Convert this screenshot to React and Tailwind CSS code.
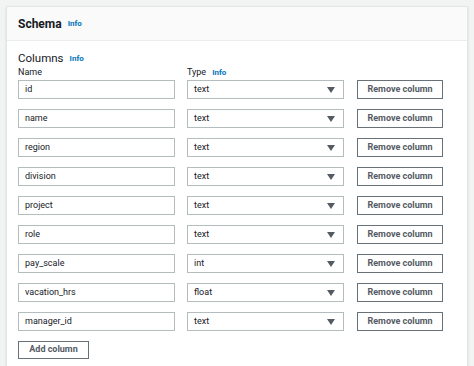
const rows = [
  ["id", "text"],
  ["name", "text"],
  ["region", "text"],
  ["division", "text"],
  ["project", "text"],
  ["role", "text"],
  ["pay_scale", "int"],
  ["vacation_hrs", "float"],
  ["manager_id", "text"],
];

const Info = () => (
  <span className="ml-[6px] text-[8px] font-bold text-[#0073bb]">Info</span>
);

export default function App() {
  return (
    <div
      className="min-h-screen bg-[#f2f3f3] pl-[6px] pt-[6px] pr-[6px] text-[#16191f]"
      style={{ fontFamily: 'Roboto, "Open Sans", sans-serif' }}
    >
      <div className="w-[462px] border border-[#e4e6e6] bg-white shadow-[0_1px_2px_rgba(0,0,0,0.12)]">
        {/* header */}
        <div className="flex h-[34px] items-center border-b border-[#eaeded] bg-[#fafafa] px-[11px]">
          <span className="text-[12px] font-bold">Schema</span>
          <Info />
        </div>

        <div className="px-[11px] pt-[10px] pb-[10px]">
          <div className="flex items-center leading-[15px]">
            <span className="text-[11.5px]">Columns</span>
            <Info />
          </div>

          <div className="flex text-[9px] leading-[13px]">
            <div className="w-[169px]">Name</div>
            <div className="flex items-center">
              Type
              <Info />
            </div>
          </div>

          <div className="mt-[1px] flex flex-col gap-[10px]">
            {rows.map(([name, type]) => (
              <div key={name} className="flex items-center">
                <div className="flex h-[19px] w-[157px] items-center border border-[#b4bdbe] px-[6px] text-[9px]">
                  {name}
                </div>
                <div className="ml-[12px] flex h-[19px] w-[157px] items-center justify-between border border-[#b4bdbe] pl-[6px] pr-[8px] text-[9px]">
                  <span>{type}</span>
                  <svg width="8" height="6" viewBox="0 0 8 6">
                    <path d="M0 0h8L4 6z" fill="#545b64" />
                  </svg>
                </div>
                <button className="ml-[13px] flex h-[19px] w-[86px] items-center justify-center border border-[#687078] bg-white text-[9px] font-bold text-[#545b64]">
                  Remove column
                </button>
              </div>
            ))}
          </div>

          <button className="mt-[10px] flex h-[18px] w-[71px] items-center justify-center border border-[#687078] bg-white text-[9px] font-bold text-[#545b64]">
            Add column
          </button>
        </div>
      </div>
    </div>
  );
}
